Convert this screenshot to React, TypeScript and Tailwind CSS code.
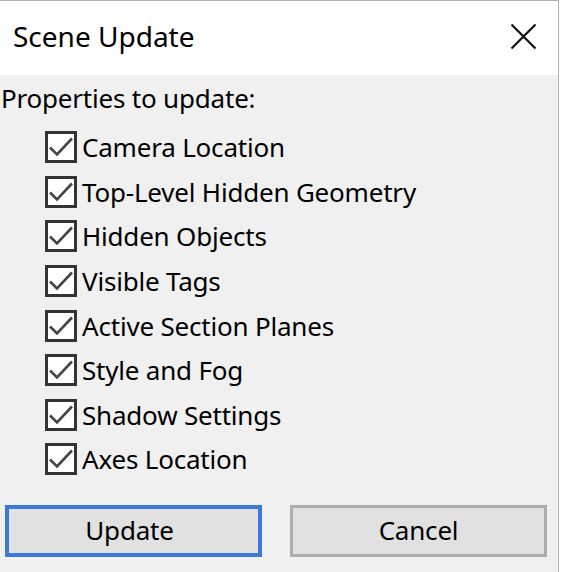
import { useState } from "react";

const options = [
  "Camera Location",
  "Top-Level Hidden Geometry",
  "Hidden Objects",
  "Visible Tags",
  "Active Section Planes",
  "Style and Fog",
  "Shadow Settings",
  "Axes Location",
];

const CheckBox = ({ checked }: { checked: boolean }) => (
  <span className="flex h-[32px] w-[32px] shrink-0 items-center justify-center border-[3px] border-[#333333] bg-white">
    {checked && (
      <svg width="26" height="26" viewBox="0 0 26 26" fill="none">
        <path
          d="M2 13.5 L9 20.5 L24 4.5"
          stroke="#444444"
          strokeWidth="2.6"
          strokeLinejoin="miter"
        />
      </svg>
    )}
  </span>
);

const App = () => {
  const [checked, setChecked] = useState<boolean[]>(options.map(() => true));

  const toggle = (i: number) =>
    setChecked((prev) => prev.map((v, j) => (j === i ? !v : v)));

  return (
    <div
      className="h-[572px] w-[562px] bg-white text-black"
      style={{ fontFamily: '"Noto Sans", "Open Sans", sans-serif' }}
    >
      <div className="flex h-[572px] w-[559px] flex-col border-r border-t border-[#b4b4b4] bg-[#f0f0f0]">
        {/* title bar */}
        <div className="flex h-[74px] items-center justify-between bg-white pb-[4px] pl-[13px] pr-[21px]">
          <span className="text-[28px] leading-[36px]">Scene Update</span>
          <button className="flex h-[28px] w-[28px] items-center justify-center">
            <svg width="27" height="27" viewBox="0 0 27 27" fill="none">
              <path d="M1.5 1.5 L25.5 25.5 M25.5 1.5 L1.5 25.5" stroke="#111111" strokeWidth="2.2" />
            </svg>
          </button>
        </div>

        <div className="flex flex-1 flex-col pl-[1px] pt-[5px] text-[26px] leading-[36px] tracking-[-0.2px]">
          <div>Properties to update:</div>

          {/* checkbox list */}
          <div className="mt-[9px] flex flex-col pl-[44px]">
            {options.map((label, i) => (
              <label
                key={label}
                onClick={() => toggle(i)}
                className="flex h-[44.6px] cursor-default items-center gap-[5px]"
              >
                <CheckBox checked={checked[i]} />
                <span>{label}</span>
              </label>
            ))}
          </div>

          {/* buttons */}
          <div className="mt-[23px] flex gap-[28px] pl-[4px]">
            <button className="flex h-[52px] w-[257px] items-center justify-center border-[4px] border-[#3a79d9] bg-[#e1e1e1] pb-[2px] pr-[8px]">
              Update
            </button>
            <button className="flex h-[52px] w-[257px] items-center justify-center border-[3px] border-[#adadad] bg-[#e1e1e1] pb-[2px]">
              Cancel
            </button>
          </div>
        </div>
      </div>
    </div>
  );
};

export default App;
